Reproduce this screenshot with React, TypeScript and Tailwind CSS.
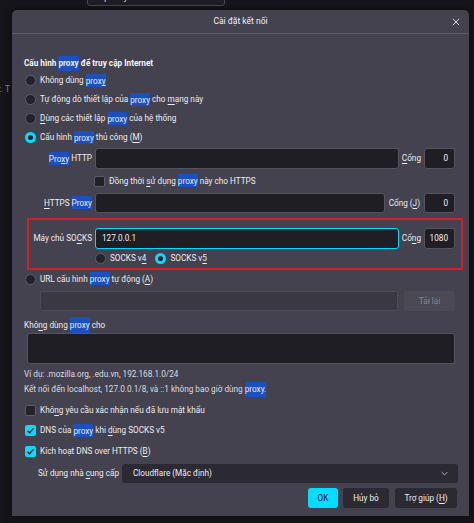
import React from 'react';

const Hl = ({ children }: { children: React.ReactNode }) => (
  <span className="bg-[#1c4fbf] text-[#e4ecff] py-[1.5px]">{children}</span>
);

const U = ({ children }: { children: React.ReactNode }) => (
  <span className="underline underline-offset-[2px] decoration-[1px]">{children}</span>
);

const Radio = ({ checked = false }: { checked?: boolean }) =>
  checked ? (
    <span className="inline-block w-[11px] h-[11px] shrink-0 rounded-full border-[3px] border-[#00ddff] bg-[#1f1e25]" />
  ) : (
    <span className="inline-block w-[11px] h-[11px] shrink-0 rounded-full border border-[#5c5b66] bg-[#23222a]" />
  );

const Check = ({ checked = false }: { checked?: boolean }) =>
  checked ? (
    <span className="flex items-center justify-center w-[11px] h-[11px] shrink-0 rounded-[2px] bg-[#00ddff]">
      <svg viewBox="0 0 12 12" className="w-[9px] h-[9px]">
        <path d="M2 6.2 L4.8 9 L10 3" fill="none" stroke="#1c1b22" strokeWidth="1.8" />
      </svg>
    </span>
  ) : (
    <span className="inline-block w-[11px] h-[11px] shrink-0 rounded-[2px] border border-[#5c5b66] bg-[#23222a]" />
  );

const Input = ({ value = '', focus = false, right = false, className = '' }: { value?: string; focus?: boolean; right?: boolean; className?: string }) => (
  <div
    className={`h-full flex items-center rounded-[3px] bg-[#1f1e25] px-[6px] ${
      focus ? 'border border-[#00ddff]' : 'border border-[#55545e]'
    } ${right ? 'justify-end' : ''} ${className}`}
  >
    <span className="text-[#f0f0f4]">{value}</span>
  </div>
);

export default function App() {
  return (
    <div
      className="relative w-[474px] h-[523px] overflow-hidden bg-[#16151b] text-[8.2px] text-[#ececf0] whitespace-nowrap"
      style={{ fontFamily: 'Roboto, "Liberation Sans", Arial, sans-serif' }}
    >
      {/* page behind the dialog */}
      <div className="absolute left-[87px] top-[-14px] w-[138px] h-[20px] rounded-[3px] border border-[#4a4953] bg-[#1f1e25] flex items-center pl-[16px] text-[10px] text-[#cfcfd8]">
        proxy
        <span className="ml-auto mr-[4px] w-[8px] h-[8px] bg-[#5a5963] rounded-[1px]" />
      </div>
      <div className="absolute left-[-2px] top-[83px] text-[8.5px] text-[#8a8a94]">t. T</div>

      <div className="relative ml-[12px] mt-[10px] w-[457px] h-[506px] rounded-t-[5px] bg-[#43424e] shadow-[0_0_8px_rgba(0,0,0,0.6)] flex flex-col">
        {/* title bar */}
        <div className="relative h-[24px] shrink-0 flex items-center justify-center border-b border-[#5d5c68] text-[8.5px] text-[#f0f0f4]">
          Cài đặt kết nối
          <svg viewBox="0 0 10 10" className="absolute right-[9px] top-[8px] w-[8px] h-[8px]">
            <path d="M1 1 L9 9 M9 1 L1 9" stroke="#d8d8de" strokeWidth="1.2" />
          </svg>
        </div>

        <div className="flex flex-col pl-[12px] pr-[14px] pt-[22px]">
          <div className="h-[15px] flex items-center font-bold text-[8.2px] text-[#f4f4f7]">
            Cấu hình&nbsp;<Hl>proxy</Hl>&nbsp;để truy cập Internet
          </div>

          <div className="h-[19px] flex items-center gap-[4px] pl-[1px]">
            <Radio />
            <span>Không dùng <Hl>prox<U>y</U></Hl></span>
          </div>
          <div className="h-[19px] flex items-center gap-[4px] pl-[1px]">
            <Radio />
            <span>Tự động dò thiết lập của <Hl>proxy</Hl> cho <U>m</U>ạng này</span>
          </div>
          <div className="h-[19px] flex items-center gap-[4px] pl-[1px]">
            <Radio />
            <span><U>D</U>ùng các thiết lập <Hl>proxy</Hl> của hệ thống</span>
          </div>
          <div className="h-[19px] flex items-center gap-[4px] pl-[1px]">
            <Radio checked />
            <span>Cấu hình <Hl>proxy</Hl> thủ công (<U>M</U>)</span>
          </div>

          {/* HTTP */}
          <div className="mt-[1px] h-[21px] flex items-center">
            <div className="w-[70px] shrink-0 text-right pr-[2px]">
              <Hl>Pro<U>x</U>y</Hl> HTTP
            </div>
            <Input className="flex-1 ml-[1px]" />
            <span className="mx-[3px]"><U>C</U>ổng</span>
            <Input value="0" right className="w-[31px] shrink-0" />
          </div>

          <div className="h-[24px] flex items-center gap-[4px] pl-[70px]">
            <Check />
            <span>Đồng thời <U>s</U>ử dụng <Hl>proxy</Hl> này cho HTTPS</span>
          </div>

          {/* HTTPS */}
          <div className="h-[20px] flex items-center">
            <div className="w-[70px] shrink-0 text-right pr-[2px]">
              <U>H</U>TTPS <Hl>Proxy</Hl>
            </div>
            <Input className="flex-1 ml-[1px]" />
            <span className="ml-[4px] mr-[4px]">Cổng (<U>J</U>)</span>
            <Input value="0" right className="w-[31px] shrink-0" />
          </div>

          {/* SOCKS, highlighted box */}
          <div className="mt-[5px] ml-[3px] -mr-[8px] h-[52px] border-2 border-[#d41f29] flex flex-col pt-[8px] pr-[6px]">
            <div className="h-[21px] flex items-center">
              <div className="w-[65px] shrink-0 text-right pr-[2px]">
                Máy chủ SO<U>C</U>KS
              </div>
              <Input value="127.0.0.1" focus className="flex-1 ml-[1px]" />
              <span className="mx-[3px]">Cổ<U>n</U>g</span>
              <Input value="1080" right className="w-[31px] shrink-0" />
            </div>
            <div className="h-[19px] flex items-center pl-[66px] gap-[4px]">
              <Radio />
              <span>SOCKS v<U>4</U></span>
              <span className="ml-[5px] flex"><Radio checked /></span>
              <span>SOCKS v<U>5</U></span>
            </div>
          </div>

          <div className="h-[18px] flex items-center gap-[4px] pl-[1px]">
            <Radio />
            <span>URL cấu hình <Hl>proxy</Hl> tự động (<U>A</U>)</span>
          </div>

          <div className="mt-[3px] h-[20px] flex items-center pl-[16px] gap-[6px]">
            <div className="flex-1 h-full rounded-[3px] bg-[#3a3943] border border-[#4c4b55]" />
            <div className="w-[51px] h-full rounded-[3px] bg-[#4a4954] flex items-center justify-center text-[#85848e]">
              Tải lại
            </div>
          </div>

          <div className="mt-[6px] h-[16px] flex items-center">
            Khô<U>n</U>g dùng&nbsp;<Hl>proxy</Hl>&nbsp;cho
          </div>
          <div className="ml-[3px] h-[31px] rounded-[3px] bg-[#1f1e25] border border-[#55545e]" />

          <div className="mt-[2px] h-[16px] flex items-center text-[#dcdce2]">
            Ví dụ: .mozilla.org, .edu.vn, 192.168.1.0/24
          </div>
          <div className="h-[15px] flex items-center text-[#dcdce2]">
            Kết nối đến localhost, 127.0.0.1/8, và ::1 không bao giờ dùng&nbsp;<Hl>proxy.</Hl>
          </div>

          <div className="mt-[3px] h-[20px] flex items-center gap-[4px] pl-[1px]">
            <Check />
            <span>Khô<U>n</U>g yêu cầu xác nhận nếu đã lưu mật khẩu</span>
          </div>
          <div className="h-[21px] flex items-center gap-[4px] pl-[1px]">
            <Check checked />
            <span>DNS của <Hl>proxy</Hl> khi <U>d</U>ùng SOCKS v5</span>
          </div>
          <div className="h-[20px] flex items-center gap-[4px] pl-[1px]">
            <Check checked />
            <span>Kích hoạt DNS over HTTPS (<U>B</U>)</span>
          </div>

          <div className="mt-[3px] h-[19px] flex items-center pl-[14px] -mr-[3px]">
            <span className="w-[84px] shrink-0">Sử dụng nhà <U>c</U>ung cấp</span>
            <div className="flex-1 h-full rounded-[3px] bg-[#2b2a33] flex items-center pl-[11px] pr-[10px]">
              <span>Cloudflare (Mặc định)</span>
              <svg viewBox="0 0 10 6" className="ml-auto w-[7px] h-[5px]">
                <path d="M1 1 L5 5 L9 1" fill="none" stroke="#c9c9d0" strokeWidth="1.2" />
              </svg>
            </div>
          </div>

          <div className="mt-[5px] h-[20px] flex items-center justify-end -mr-[2px]">
            <div className="w-[30px] h-full rounded-[3px] bg-[#00ddff] text-[#15141a] flex items-center justify-center">
              OK
            </div>
            <div className="ml-[5px] w-[46px] h-full rounded-[3px] bg-[#2b2a33] flex items-center justify-center">
              Hủy bỏ
            </div>
            <div className="ml-[6px] w-[62px] h-full rounded-[3px] bg-[#2b2a33] flex items-center justify-center">
              Trợ giúp (<U>H</U>)
            </div>
          </div>
        </div>
      </div>
    </div>
  );
}
